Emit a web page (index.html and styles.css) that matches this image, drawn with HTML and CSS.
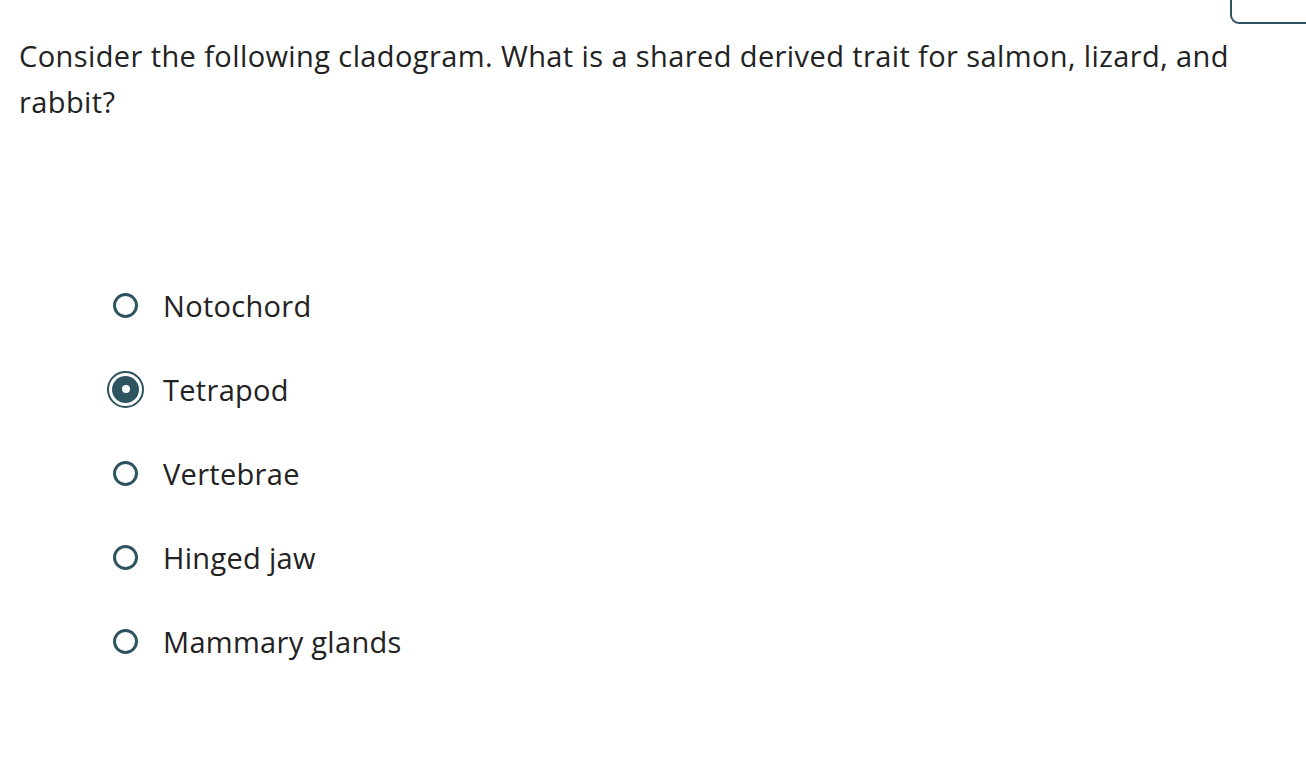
FILE: index.html
```html
<!DOCTYPE html>
<html>
<head>
<meta charset="utf-8">
<link rel="stylesheet" href="styles.css">
</head>
<body>
<div class="corner-box"></div>
<main class="question">
  <p class="prompt">Consider the following cladogram. What is a shared derived trait for salmon, lizard, and rabbit?</p>
  <ul class="options">
    <li class="option"><span class="radio"></span><span class="label">Notochord</span></li>
    <li class="option selected"><span class="radio"><span class="dot"></span></span><span class="label">Tetrapod</span></li>
    <li class="option"><span class="radio"></span><span class="label">Vertebrae</span></li>
    <li class="option"><span class="radio"></span><span class="label">Hinged jaw</span></li>
    <li class="option"><span class="radio"></span><span class="label">Mammary glands</span></li>
  </ul>
</main>
</body>
</html>
```
FILE: styles.css
```css
html, body {
  margin: 0;
  padding: 0;
  background: #ffffff;
}
body {
  font-family: "Open Sans", "Noto Sans", sans-serif;
  color: #222222;
  width: 1306px;
  height: 778px;
  overflow: hidden;
  position: relative;
}
.corner-box {
  position: absolute;
  top: -4px;
  left: 1230px;
  width: 90px;
  height: 24px;
  border: 2.5px solid #2e5462;
  border-bottom-left-radius: 9px;
}
.question {
  padding: 33px 0 0 19px;
}
.prompt {
  margin: 0;
  font-size: 29px;
  letter-spacing: 0.4px;
  line-height: 46px;
  max-width: 1250px;
}
.options {
  list-style: none;
  margin: 138px 0 0 0;
  padding: 0 0 0 88px;
}
.option {
  display: flex;
  align-items: center;
  height: 84px;
}
.radio {
  box-sizing: border-box;
  width: 25px;
  height: 25px;
  margin: 0 6px;
  border: 3.5px solid #2e5462;
  border-radius: 50%;
  flex: none;
  display: flex;
  align-items: center;
  justify-content: center;
}
.selected .radio {
  width: 37px;
  height: 37px;
  margin: 0;
  border: 2px solid #2e5462;
  background: #ffffff;
}
.selected .radio .dot {
  width: 27px;
  height: 27px;
  border-radius: 50%;
  background: #2e5462;
  display: flex;
  align-items: center;
  justify-content: center;
}
.selected .radio .dot::after {
  content: "";
  width: 8px;
  height: 8px;
  border-radius: 50%;
  background: #ffffff;
}
.label {
  margin-left: 19px;
  font-size: 29px;
  letter-spacing: 0.3px;
}
.selected .label {
  margin-left: 19px;
}
```
